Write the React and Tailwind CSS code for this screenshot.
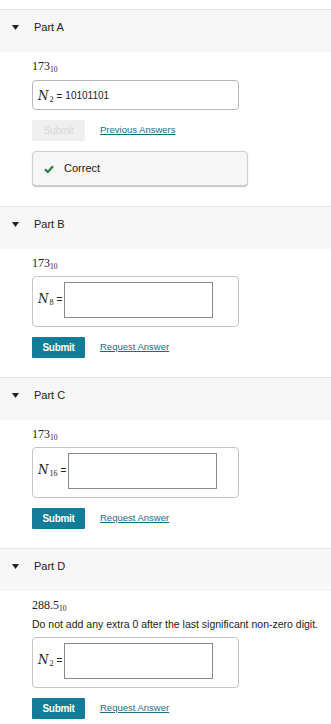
const sans = { fontFamily: '"Liberation Sans", Arial, sans-serif' };

function Caret() {
  return (
    <svg width="7" height="5" viewBox="0 0 7 5" className="ml-[12px] mr-[15px]">
      <path d="M0 0 L7 0 L3.5 5 Z" fill="#222" />
    </svg>
  );
}

function Header({ title }) {
  return (
    <div className="border-t border-[#e6e6e6]">
      <div className="h-[42px] bg-[#f7f7f7] pt-[10px]">
        <div className="h-[14px] flex items-center text-[11px] text-[#222]">
          <Caret />
          <span>{title}</span>
        </div>
      </div>
    </div>
  );
}

function MathNum({ value }) {
  return (
    <div className="h-[14px] leading-[14px] text-[12px] text-[#222] font-['Liberation_Serif',serif]">
      {value}
      <sub className="text-[7.5px] align-baseline relative top-[1.5px]">10</sub>
    </div>
  );
}

function Label({ sub }) {
  return (
    <span className="text-[#222] whitespace-nowrap">
      <span className="italic text-[12px] font-['DejaVu_Serif',serif]">N</span>
      <sub className="text-[8px] align-baseline relative top-[2px] ml-[1px] font-['Liberation_Serif',serif]">{sub}</sub>
      <span className="text-[10px] ml-[3px]">=</span>
    </span>
  );
}

function AnswerBox({ sub }) {
  return (
    <div className="mt-[6px] w-[207px] h-[51px] border border-[#c4c4c4] rounded-[4px] flex items-start pl-[5px] pt-[5px]">
      <div className="mt-[4px] mr-[2px]">
        <Label sub={sub} />
      </div>
      <div className="w-[149px] h-[36px] border border-[#8a8a8a] bg-white" />
    </div>
  );
}

function Actions() {
  return (
    <div className="mt-[10px] flex items-center">
      <button className="w-[53px] h-[21px] bg-[#137c98] text-white text-[10px] font-bold tracking-[-0.3px] rounded-[1px]">
        Submit
      </button>
      <a className="ml-[15px] text-[9.5px] text-[#1a6d8a] underline underline-offset-[1px]">Request Answer</a>
    </div>
  );
}

function Part({ title, value, sub, note }) {
  return (
    <section>
      <Header title={title} />
      <div className="pl-[32px] pt-[7px] pb-[19px]">
        <MathNum value={value} />
        {note && <div className="mt-[5px] text-[10.5px] text-[#222] leading-[14px] whitespace-nowrap">{note}</div>}
        <AnswerBox sub={sub} />
        <Actions />
      </div>
    </section>
  );
}

export default function App() {
  return (
    <div className="w-[331px] min-h-[724px] bg-white pt-[9px]" style={sans}>
      <section>
        <Header title="Part A" />
        <div className="pl-[32px] pt-[7px] pb-[20px]">
          <MathNum value="173" />
          <div className="mt-[7px] w-[207px] h-[30px] border border-[#b8b8b8] rounded-[4px] flex items-center pl-[5px]">
            <Label sub="2" />
            <span className="ml-[3px] text-[10px] text-[#222]">10101101</span>
          </div>
          <div className="mt-[10px] flex items-center">
            <button className="w-[53px] h-[21px] bg-[#efefef] text-[#d8d8d8] text-[10px] tracking-[-0.3px]">Submit</button>
            <a className="ml-[15px] text-[9.5px] text-[#1a6d8a] underline underline-offset-[1px]">Previous Answers</a>
          </div>
          <div className="mt-[10px] w-[216px] h-[35px] bg-[#f6f6f6] border border-[#cfcfcf] rounded-[4px] shadow-[0_1px_1px_rgba(0,0,0,0.25)] flex items-center pl-[11px]">
            <svg width="10" height="8" viewBox="0 0 10 8">
              <path d="M1 4.2 L3.8 7 L9 1.2" fill="none" stroke="#2e7d4f" strokeWidth="2.2" />
            </svg>
            <span className="ml-[10px] text-[11px] text-[#222]">Correct</span>
          </div>
        </div>
      </section>
      <Part title="Part B" value="173" sub="8" />
      <Part title="Part C" value="173" sub="16" />
      <Part
        title="Part D"
        value="288.5"
        sub="2"
        note="Do not add any extra 0 after the last significant non-zero digit."
      />
    </div>
  );
}
